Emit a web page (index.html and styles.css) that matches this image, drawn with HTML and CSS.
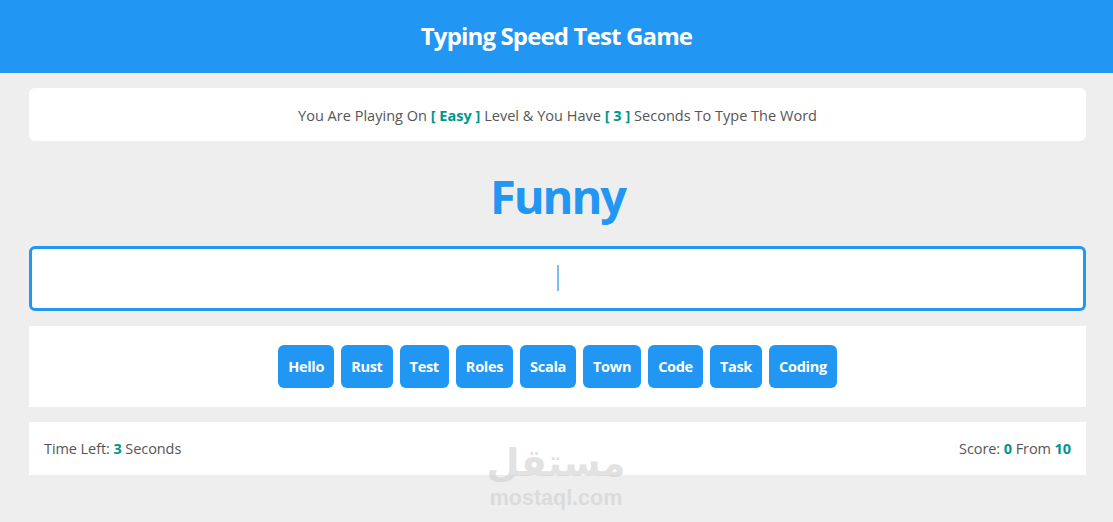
FILE: index.html
```html
<!DOCTYPE html>
<html>
<head>
	<title>Typing Speed Test Game</title>
	<meta charset="utf-8">
	<link rel="stylesheet" href="styles.css">
</head>
<body>
	<header class="name">Typing Speed Test Game</header>
	<div class="game">
		<div class="message">You Are Playing On <span class="hl">[ Easy ]</span> Level &amp; You Have <span class="hl">[ 3 ]</span> Seconds To Type The Word</div>
		<div class="the-word">Funny</div>
		<div class="input"><span class="caret"></span></div>
		<div class="upcoming-words">
			<div>Hello</div>
			<div>Rust</div>
			<div>Test</div>
			<div>Roles</div>
			<div>Scala</div>
			<div>Town</div>
			<div>Code</div>
			<div>Task</div>
			<div>Coding</div>
		</div>
		<div class="control">
			<div>Time Left: <span class="num">3</span> Seconds</div>
			<div>Score: <span class="num">0</span> From <span class="num">10</span></div>
		</div>
	</div>
	<div class="watermark">
		<div class="wm-ar" dir="rtl" lang="ar">مستقل</div>
		<div class="wm-en">mostaql.com</div>
	</div>
</body>
</html>
```

FILE: styles.css
```css
* {
	box-sizing: border-box;
}
html, body {
	height: 100%;
}
body {
	margin: 0;
	background-color: #EEEEEE;
	font-family: "Open Sans", "Noto Sans", sans-serif;
	color: #555;
	position: relative;
	overflow: hidden;
}
.name {
	height: 73px;
	line-height: 71px;
	background-color: #2196F3;
	color: white;
	font-size: 24px;
	font-weight: 700;
	text-align: center;
	letter-spacing: -0.85px;
}
.game {
	margin: 15px 27px 0 29px;
}
.message {
	height: 53px;
	line-height: 55px;
	background-color: white;
	border-radius: 6px;
	text-align: center;
	font-size: 14.5px;
	letter-spacing: 0.02px;
}
.hl, .num {
	color: #009688;
	font-weight: 700;
}
.the-word {
	height: 105px;
	line-height: 110px;
	text-align: center;
	color: #2196F3;
	font-size: 47px;
	font-weight: 700;
	letter-spacing: -2px;
}
.input {
	height: 65px;
	background-color: white;
	border: 3px solid #2196F3;
	border-radius: 6px;
	display: flex;
	align-items: center;
	justify-content: center;
}
.caret {
	width: 2px;
	height: 26px;
	margin-bottom: 2px;
	background-color: #7DBEF7;
}
.upcoming-words {
	margin-top: 15px;
	height: 81px;
	background-color: white;
	display: flex;
	align-items: center;
	justify-content: center;
	gap: 7px;
}
.upcoming-words div {
	height: 43px;
	line-height: 43px;
	padding: 0 10px;
	background-color: #2196F3;
	color: white;
	font-size: 14.5px;
	font-weight: 700;
	border-radius: 6px;
	letter-spacing: -0.3px;
}
.control {
	margin-top: 15px;
	height: 53px;
	background-color: white;
	display: flex;
	align-items: center;
	justify-content: space-between;
	padding: 0 15px;
	font-size: 14.5px;
	letter-spacing: -0.08px;
}
.watermark {
	position: absolute;
	left: 438px;
	top: 441px;
	width: 236px;
	text-align: center;
	pointer-events: none;
	opacity: 0.6;
	color: #D0D0D0;
}
.wm-ar {
	font-family: "DejaVu Sans", sans-serif;
	font-weight: 700;
	font-size: 38px;
	line-height: 44px;
}
.wm-en {
	font-family: "Liberation Sans", sans-serif;
	font-weight: 700;
	font-size: 21.5px;
	line-height: 26px;
}
```
